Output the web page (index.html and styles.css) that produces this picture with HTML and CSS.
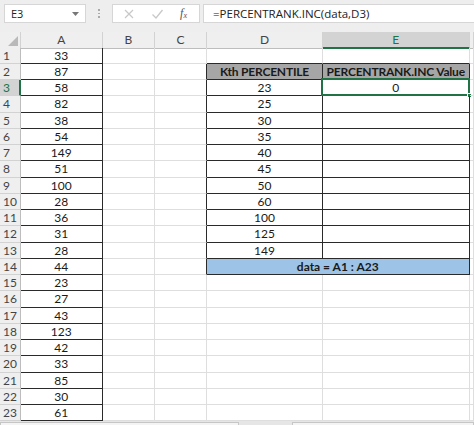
FILE: index.html
```
<!DOCTYPE html>
<html>
<head>
<meta charset="utf-8">
<link rel="stylesheet" href="styles.css">
</head>
<body>
<div class="app">
  <div class="toolbar">
    <div class="namebox"><span>E3</span><svg class="caret" width="7" height="4" viewBox="0 0 7 4"><path d="M0 0H7L3.5 4Z" fill="#777"/></svg></div>
    <div class="grip"><i></i><i></i><i></i></div>
    <div class="fxbox">
      <svg class="ico" width="12" height="12" viewBox="0 0 12 12"><path d="M2 2L10 10M10 2L2 10" stroke="#c8c8c8" stroke-width="1.2" fill="none"/></svg>
      <svg class="ico" width="13" height="12" viewBox="0 0 13 12"><path d="M1.5 6.5L5 10L11.5 2" stroke="#c8c8c8" stroke-width="1.3" fill="none"/></svg>
      <span class="fx">f<sub>x</sub></span>
    </div>
    <div class="formula">=PERCENTRANK.INC(data,D3)</div>
  </div>
  <div class="sheet">
    <div class="corner"><svg width="10" height="10" viewBox="0 0 10 10"><path d="M10 0V10H0Z" fill="#b9b9b9"/></svg></div>
    <div class="ch">A</div><div class="ch">B</div><div class="ch">C</div><div class="ch">D</div><div class="ch sel">E</div><div class="ch last"></div>
  </div>
  <div class="grid" id="grid"></div>
  <div class="bottom"><div class="tabs"></div><div class="scroll"></div></div>
</div>
<script>
var a=[33,87,58,82,38,54,149,51,100,28,36,31,28,44,23,27,43,123,42,33,85,30,61];
var d=[23,25,30,35,40,45,50,60,100,125,149];
var g=document.getElementById('grid');
var h='';
for(var r=1;r<=23;r++){
  h+='<div class="rh'+(r==3?' sel':'')+'">'+r+'</div>';
  h+='<div class="c a">'+a[r-1]+'</div>';
  h+='<div class="c"></div>';
  var cl='c';
  if(r>=2&&r<=14) cl+=' rb';
  h+='<div class="'+cl+'"></div>';
  if(r==1){
    h+='<div class="c bb"></div><div class="c bb"></div>';
  } else if(r==2){
    h+='<div class="c t th">Kth PERCENTILE</div><div class="c t th">PERCENTRANK.INC Value</div>';
  } else if(r<=13){
    h+='<div class="c t">'+d[r-3]+'</div><div class="c t">'+(r==3?'0<div class="cursor"><span class="handle"></span></div>':'')+'</div>';
  } else if(r==14){
    h+='<div class="c t note">data = A1 : A23</div>';
  } else {
    h+='<div class="c"></div><div class="c"></div>';
  }
  h+='<div class="c last"></div>';
}
g.innerHTML=h;
</script>
</body>
</html>
```
FILE: styles.css
```
html,body{margin:0;padding:0;}
body{width:474px;height:425px;overflow:hidden;background:#fff;font-family:"Lato","Liberation Sans",sans-serif;}
.app{width:474px;height:425px;overflow:hidden;display:flex;flex-direction:column;}
.toolbar{height:31.5px;background:#eeeeee;display:flex;align-items:flex-start;padding-top:4px;box-sizing:border-box;flex:none;}
.namebox{margin-left:4px;width:82px;height:19px;background:#fff;border:1px solid #d6d6d6;box-sizing:border-box;display:flex;align-items:center;justify-content:space-between;padding:0 6px 0 6px;font-family:"Open Sans","Liberation Sans",sans-serif;font-size:11px;color:#222;}
.grip{width:26px;height:19px;display:flex;flex-direction:column;align-items:center;justify-content:center;gap:2px;}
.grip i{display:block;width:1.5px;height:1.5px;background:#aaa;}
.fxbox{width:88px;height:19px;background:#fff;border:1px solid #d6d6d6;box-sizing:border-box;display:flex;align-items:center;justify-content:space-around;padding:0 4px 0 2px;}
.fx{font-family:"Liberation Serif",serif;font-style:italic;font-size:12px;color:#555;line-height:1;}
.fx sub{font-size:8px;vertical-align:-1px;}
.formula{margin-left:3px;flex:1;height:19px;background:#fff;border:1px solid #d6d6d6;border-right:none;box-sizing:border-box;display:flex;align-items:center;padding-left:9px;font-family:"Open Sans","Liberation Sans",sans-serif;font-size:11.5px;color:#222;white-space:nowrap;}
.sheet{display:grid;grid-template-columns:20.5px 82.5px 52px 52px 116px 146.5px 1fr;height:16px;flex:none;background:#efefef;}
.sheet>div{border-right:1px solid #d2d2d2;border-bottom:1px solid #bdbdbd;box-sizing:border-box;display:flex;align-items:center;justify-content:center;font-size:12px;color:#444;}
.corner{justify-content:flex-end!important;align-items:flex-end!important;padding:0 2px 2px 0;}
.corner svg{display:block;}
.ch.sel{background:#d3d3d3;border-bottom:2px solid #217346!important;color:#217346;}
.grid{display:grid;grid-template-columns:20.5px 82.5px 52px 52px 116px 146.5px 1fr;grid-auto-rows:16.25px;flex:none;}
.grid>div{box-sizing:border-box;border-right:1px solid #dedede;border-bottom:1px solid #dedede;display:flex;align-items:center;justify-content:center;font-size:12px;color:#1a1a1a;white-space:nowrap;position:relative;}
.rh{background:#efefef;border-right-color:#bdbdbd!important;border-bottom-color:#d2d2d2!important;color:#444!important;justify-content:flex-start!important;padding-left:3px;}
.rh.sel{background:#d3d3d3;border-right:2px solid #217346!important;color:#217346!important;}
.grid>.a{border-right:1px solid #2a2a2a;border-bottom:1px solid #2a2a2a;}
.grid>.rb{border-right:1px solid #2a2a2a;}
.grid>.bb{border-bottom:1px solid #2a2a2a;}
.grid>.t{border-right:1px solid #2a2a2a;border-bottom:1px solid #2a2a2a;}
.grid>.th{background:#a6a6a6;font-weight:700;letter-spacing:-0.2px;}
.grid>.note{grid-column:span 2;background:#9dc3e6;font-weight:700;}
.cursor{position:absolute;left:-2px;top:-2px;right:-1px;bottom:-1px;border:2px solid #217346;}
.handle{position:absolute;right:-4px;bottom:-4px;width:5px;height:5px;background:#217346;border:1px solid #fff;box-sizing:border-box;}
.bottom{flex:1;background:#e6e6e6;display:flex;align-items:flex-start;padding-top:1px;}
.tabs{width:239px;height:8px;border:1px solid #c6c6c6;background:#f4f4f4;box-sizing:border-box;}
.scroll{margin-left:53px;flex:1;height:8px;border:1px solid #c6c6c6;background:#f4f4f4;box-sizing:border-box;}
```
